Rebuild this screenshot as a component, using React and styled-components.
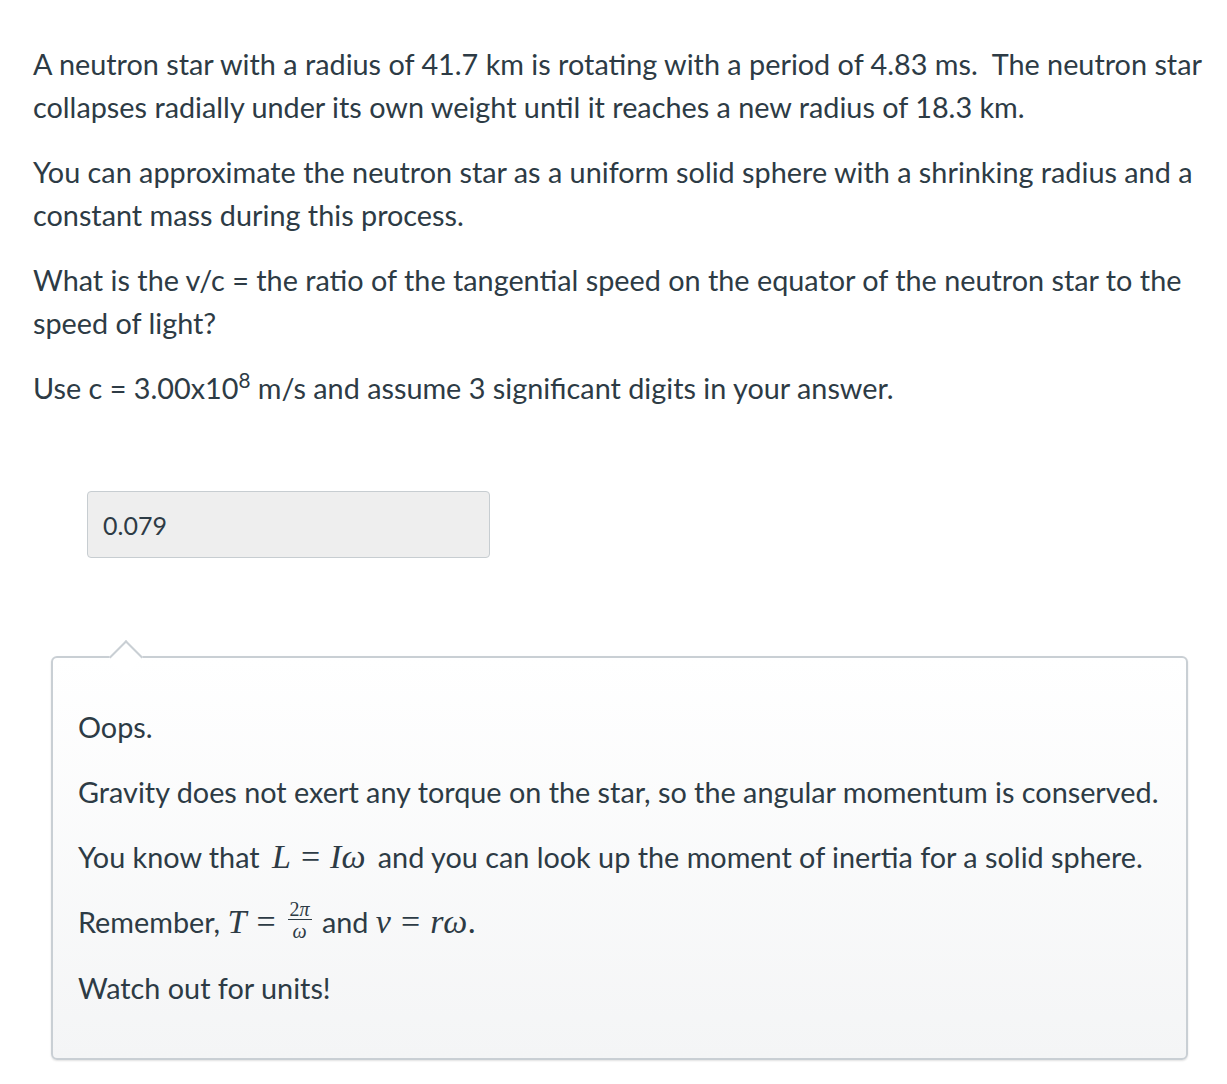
import React from 'react';
import styled, { createGlobalStyle } from 'styled-components';

const GlobalStyle = createGlobalStyle`
    body {
        margin: 0;
        background: #fff;
        font-family: Lato, "Open Sans", sans-serif;
        color: #2d3b45;
    }
`;

const Page = styled.div`
    width: 1227px;
    min-height: 1084px;
    box-sizing: border-box;
    padding: 21px 18px 26px 33px;
`;

const Paragraph = styled.p`
    margin: 22px 0;
    font-size: 28.8px;
    line-height: 43px;
`;

const Sup = styled.sup`
    font-size: 0.72em;
    line-height: 0;
    vertical-align: 0;
    position: relative;
    top: -0.55em;
`;

const AnswerRow = styled.div`
    margin-top: 81px;
    padding-left: 54px;
`;

const AnswerBox = styled.div`
    width: 403px;
    height: 67px;
    box-sizing: border-box;
    padding: 0 15px;
    display: flex;
    align-items: center;
    background: #eeeeee;
    border: 1.5px solid #c7cdd1;
    border-radius: 4px;
    font-size: 25px;
`;

const Comment = styled.div`
    position: relative;
    margin: 98px 0 0 18px;
    width: 1137px;
    box-sizing: border-box;
    padding: 26px 25px;
    background: linear-gradient(#ffffff, #f4f5f6);
    border: 2px solid #c9cfd4;
    border-radius: 6px;
    box-shadow: 0 1px 2px rgba(0, 0, 0, 0.12);
`;

const Arrow = styled.div`
    position: absolute;
    top: -13px;
    left: 61px;
    width: 22px;
    height: 22px;
    background: #fff;
    border-top: 2px solid #c9cfd4;
    border-left: 2px solid #c9cfd4;
    transform: rotate(45deg);
`;

const Math = styled.span`
    font-family: "Liberation Serif", "DejaVu Serif", serif;
    font-size: 34px;
    line-height: 1;
    white-space: nowrap;
    margin: 0 ${props => props.side || 0}px;
`;

const Var = styled.i`
    font-style: italic;
`;

const Op = styled.span`
    margin: 0 10px;
`;

const Frac = styled.span`
    display: inline-flex;
    flex-direction: column;
    align-items: center;
    vertical-align: middle;
    font-size: 20px;
    line-height: 17px;
    margin: 0 3px 0 2px;
    position: relative;
    top: -5px;
`;

const FracTop = styled.span`
    border-bottom: 1px solid #2d3b45;
    padding: 0 2px 1px;
`;

const FracBottom = styled.span`
    padding-top: 3px;
    font-style: italic;
`;

const App = () => (
    <Page>
        <GlobalStyle />
        <Paragraph>
            A neutron star with a radius of 41.7 km is rotating with a period of 4.83 ms.&nbsp; The neutron star
            collapses radially under its own weight until it reaches a new radius of 18.3 km.
        </Paragraph>
        <Paragraph>
            You can approximate the neutron star as a uniform solid sphere with a shrinking radius and a
            constant mass during this process.
        </Paragraph>
        <Paragraph>
            What is the v/c = the ratio of the tangential speed on the equator of the neutron star to the
            speed of light?
        </Paragraph>
        <Paragraph>
            Use c = 3.00x10<Sup>8</Sup> m/s and assume 3 significant digits in your answer.
        </Paragraph>

        <AnswerRow>
            <AnswerBox>0.079</AnswerBox>
        </AnswerRow>

        <Comment>
            <Arrow />
            <Paragraph>Oops.</Paragraph>
            <Paragraph>
                Gravity does not exert any torque on the star, so the angular momentum is conserved.
            </Paragraph>
            <Paragraph>
                You know that{' '}
                <Math side={5}>
                    <Var>L</Var><Op>=</Op><Var>Iω</Var>
                </Math>{' '}
                and you can look up the moment of inertia for a solid sphere.
            </Paragraph>
            <Paragraph>
                Remember,{' '}
                <Math>
                    <Var>T</Var><Op>=</Op>
                    <Frac>
                        <FracTop>2<Var>π</Var></FracTop>
                        <FracBottom>ω</FracBottom>
                    </Frac>
                </Math>{' '}
                and{' '}
                <Math>
                    <Var>v</Var><Op>=</Op><Var>rω</Var>.
                </Math>
            </Paragraph>
            <Paragraph>Watch out for units!</Paragraph>
        </Comment>
    </Page>
);

export default App;
